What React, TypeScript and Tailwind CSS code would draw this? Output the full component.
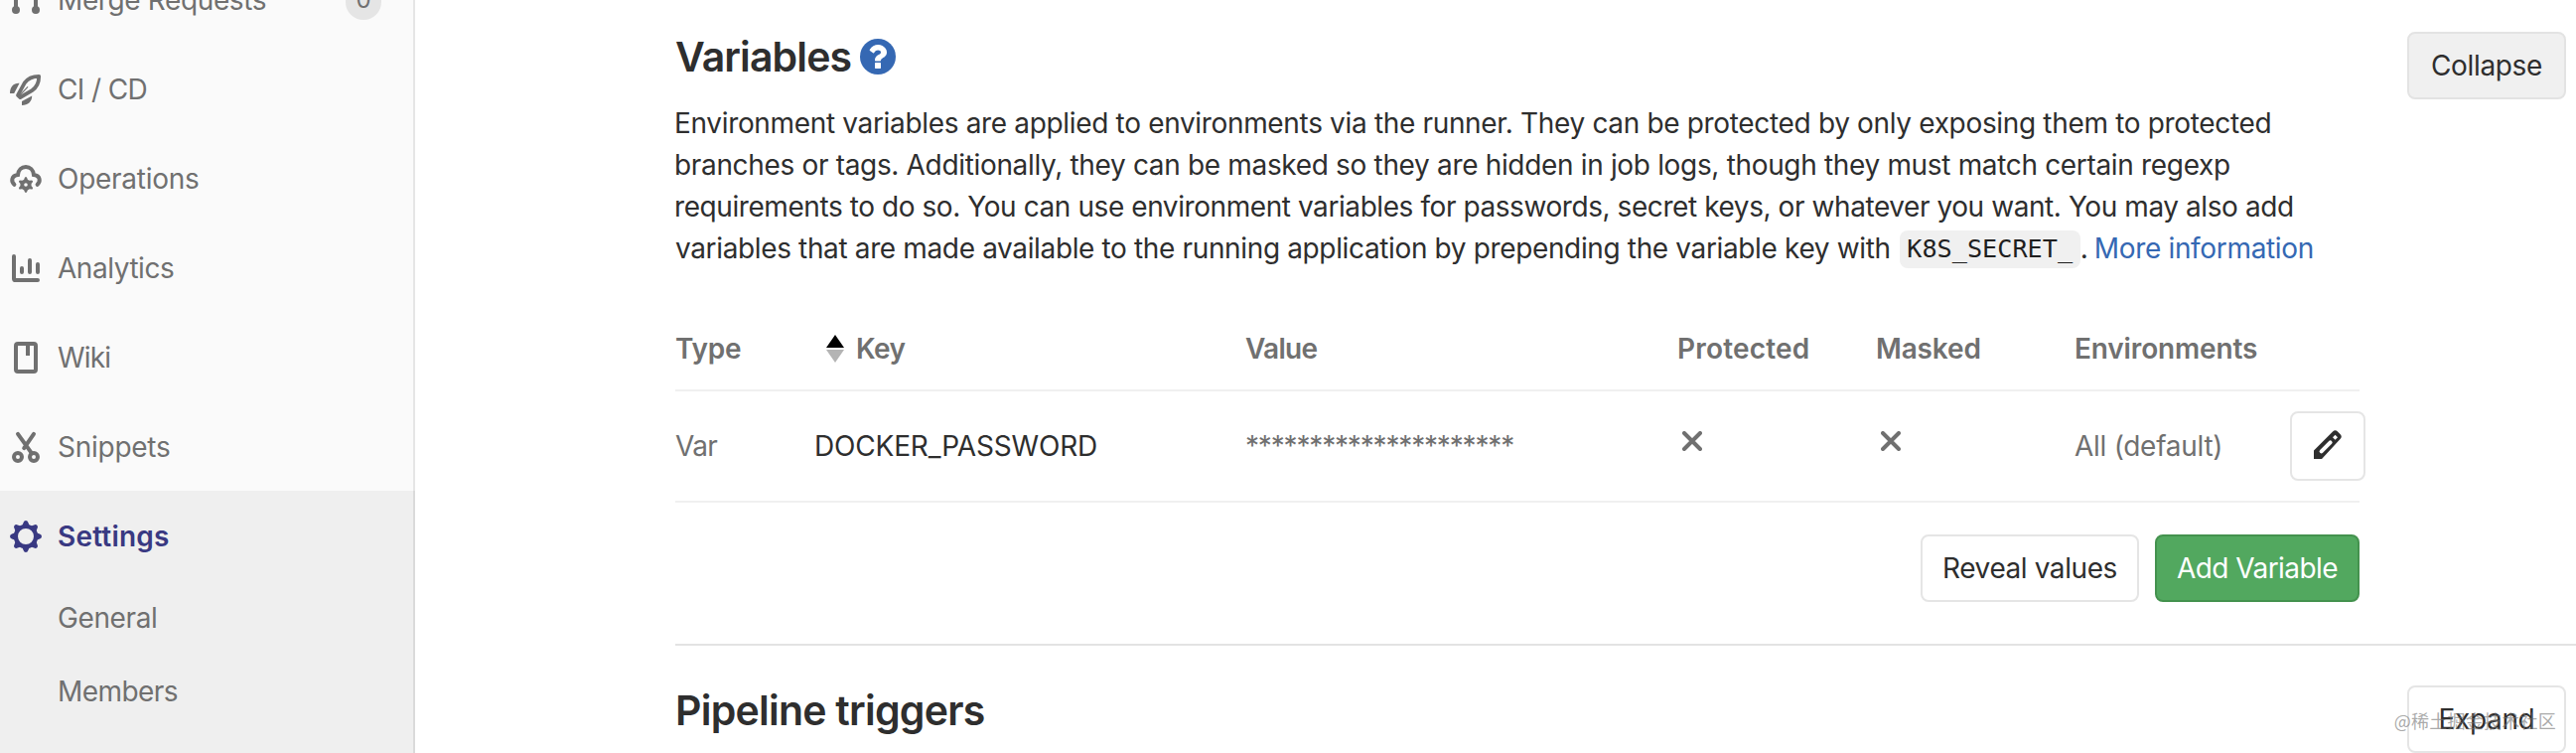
import type { ReactNode } from "react";

function Icon({ children, className = "" }: { children: ReactNode; className?: string }) {
  return (
    <svg viewBox="0 0 16 16" className={`h-8 w-8 shrink-0 overflow-visible ${className}`} fill="currentColor">
      {children}
    </svg>
  );
}

const MergeIcon = () => (
  <Icon>
    <circle cx="3" cy="3" r="2" />
    <circle cx="3" cy="13" r="2" />
    <circle cx="13" cy="13" r="2" />
    <path d="M3 3v10M13 13V6a3 3 0 0 0-3-3H8" fill="none" stroke="currentColor" strokeWidth="2" />
  </Icon>
);

const RocketIcon = () => (
  <Icon>
    <path
      d="M14.6 1.4c-3.4 0-5.6 1-7.2 3.3L4 10.9l1.2 1.1 5.9-3.4c2.4-1.6 3.5-3.8 3.5-7.2Z"
      fill="none"
      stroke="currentColor"
      strokeWidth="1.9"
      strokeLinejoin="round"
    />
    <path d="M4.8 4.9C1.9 4.7 0 6.6 0 10h2.1ZM11.1 11.3c0 3-2 4.7-5.1 4.7v-2Z" />
    <path d="m5 10.9 4-4.2" fill="none" stroke="currentColor" strokeWidth=".6" />
  </Icon>
);

const CloudGearIcon = () => (
  <Icon>
    <path
      d="M2.2 10.9C.6 9.4.5 6.5 4 6c.2-2.4 1.9-4 4-4s3.8 1.6 4 4c3.5.5 3.4 3.4 1.8 4.9"
      fill="none"
      stroke="currentColor"
      strokeWidth="2"
      strokeLinecap="round"
    />
    {[0, 60, 120, 180, 240, 300].map((a) => (
      <path key={a} d="M6.9 9 7.4 7.5Q8 6.5 8.6 7.5L9.1 9Z" transform={`rotate(${a} 8 11)`} />
    ))}
    <circle cx="8" cy="11" r="1.85" fill="none" stroke="currentColor" strokeWidth="1.9" />
  </Icon>
);

const ChartIcon = () => (
  <Icon>
    <path
      d="M2 2v11.2a.8.8 0 0 0 .8.8H14M6 8v2M10 4v6M14 6v4"
      fill="none"
      stroke="currentColor"
      strokeWidth="2"
      strokeLinecap="round"
    />
  </Icon>
);

const BookIcon = () => (
  <Icon>
    <rect x="3" y="1" width="10" height="14" rx="1" fill="none" stroke="currentColor" strokeWidth="2" />
    <path d="M8 1h2v6H8z" />
  </Icon>
);

const ScissorsIcon = () => (
  <Icon>
    <g fill="none" stroke="currentColor" strokeWidth="2" strokeLinecap="round">
      <circle cx="4" cy="13" r="2" />
      <circle cx="12" cy="13" r="2" />
      <path d="m4 1.4 7 9.8M12 1.4 7.1 8.6" />
    </g>
  </Icon>
);

const GearIcon = () => (
  <Icon>
    <circle cx="8" cy="8" r="5.05" fill="none" stroke="currentColor" strokeWidth="2.1" />
    {[0, 45, 90, 135, 180, 225, 270, 315].map((a) => (
      <path key={a} d="M6.100 2.700 6.800 1Q7.100 0 8 0t1.200 1l.7 1.700Z" transform={`rotate(${a} 8 8)`} />
    ))}
  </Icon>
);

const HelpIcon = () => (
  <svg viewBox="0 0 1536 1536" className="h-9 w-9">
    <circle cx="768" cy="768" r="768" fill="#3568b3" />
    <path
      fill="#fff"
      d="M896 1248v-192q0-14-9-23t-23-9h-192q-14 0-23 9t-9 23v192q0 14 9 23t23 9h192q14 0 23-9t9-23zm256-672q0-88-55.500-163t-138.500-116-170-41q-243 0-371 213-15 24 8 42l132 100q7 6 19 6 16 0 25-12 53-68 86-92 34-24 86-24 48 0 85.500 26t37.500 59q0 38-20 61t-68 45q-63 28-115.500 86.500t-52.500 125.500v36q0 14 9 23t23 9h192q14 0 23-9t9-23q0-19 21.500-49.500t54.500-49.500q32-18 49-28.500t46-35 44.500-48 28-60.500 12.500-81z"
    />
  </svg>
);

const CrossIcon = () => (
  <svg viewBox="0 0 20 20" className="h-5 w-5" fill="none" stroke="#707070" strokeWidth="4" strokeLinecap="round">
    <path d="m2 2 16 16M18 2 2 18" />
  </svg>
);

const PencilIcon = () => (
  <svg viewBox="0 0 28 29" className="h-[29px] w-7">
    <path d="M0 29v-8.500L19 1.500q2.500-2.500 5 0L26.500 4q2.500 2.500 0 5L8 29Z" fill="#2e2e2e" />
    <path d="M7.600 21.400 16.600 12.300" stroke="#fff" strokeWidth="4" strokeLinecap="round" />
    <path d="M21.500 4.700 24 7.200l-2.500 2.500L19 7.200Z" fill="#fff" />
  </svg>
);

const SortIcon = () => (
  <svg viewBox="0 0 18 28" className="h-7 w-[18px]">
    <path d="M9 0l9 13H0Z" fill="#000" />
    <path d="M9 28l9-13H0Z" fill="#b4b4b4" />
  </svg>
);

function NavItem({ icon, children, className }: { icon: ReactNode; children: ReactNode; className: string }) {
  return (
    <li className={`flex shrink-0 items-center gap-4 pr-8 pl-[10px] ${className}`}>
      {icon}
      {children}
    </li>
  );
}

function Button({ children, className }: { children: ReactNode; className: string }) {
  return (
    <button className={`flex h-[68px] shrink-0 items-center justify-center rounded-lg border-2 ${className}`}>
      {children}
    </button>
  );
}

export default function App() {
  return (
    <div className="relative flex h-[758px] w-[2594px] overflow-hidden bg-white font-['Inter','Noto_Sans_CJK_SC',sans-serif] text-[28px] leading-[42px] text-[#2e2e2e]">
      <aside className="flex w-[418px] shrink-0 flex-col bg-[#fafafa] text-[#707070]">
        <ul className="flex flex-col border-r-2 border-[#e5e5e5]">
          <NavItem icon={<MergeIcon />} className="-mt-[45px] h-[90px]">
            <span className="tracking-[-0.38px]">Merge Requests</span>
            <span className="ml-auto flex h-10 w-9 items-center justify-center rounded-[20px] bg-[#e5e5e5] text-2xl">0</span>
          </NavItem>
          <NavItem icon={<RocketIcon />} className="h-[90px]">
            <span className="tracking-[-0.63px]">CI / CD</span>
          </NavItem>
          <NavItem icon={<CloudGearIcon />} className="h-[90px]">
            <span className="tracking-[-0.27px]">Operations</span>
          </NavItem>
          <NavItem icon={<ChartIcon />} className="h-[90px]">
            <span className="tracking-[-0.45px]">Analytics</span>
          </NavItem>
          <NavItem icon={<BookIcon />} className="h-[90px]">
            <span className="tracking-[-0.8px]">Wiki</span>
          </NavItem>
          <NavItem icon={<ScissorsIcon />} className="h-[89px]">
            <span className="tracking-[-0.26px]">Snippets</span>
          </NavItem>
        </ul>
        <div className="grow border-r-2 border-[#dadada] bg-[#efefef]">
          <ul>
            <NavItem icon={<GearIcon />} className="h-[92px] font-semibold text-[#393982]">
              <span className="tracking-[0.19px]">Settings</span>
            </NavItem>
          </ul>
          <ul className="-mt-px pl-[58px] leading-[74px]">
            <li className="tracking-[-0.38px]">General</li>
            <li className="tracking-[-0.58px]">Members</li>
          </ul>
        </div>
      </aside>

      <main className="flex min-w-0 grow flex-col pl-[262px]">
        <section className="flex h-[650px] shrink-0 items-start justify-between border-b-2 border-[#e3e3e3] pr-[10px]">
          <div className="w-[1696px] pt-[33px]">
            <h2 className="flex h-12 items-center gap-[9px] text-[41px] leading-[48px] font-semibold">
              <span className="tracking-[-0.88px]">Variables</span>
              <HelpIcon />
            </h2>
            <p className="mt-[22px] whitespace-nowrap">
              <span className="-ml-px block tracking-[-0.334px]">
                Environment variables are applied to environments via the runner. They can be protected by only exposing them to protected
              </span>
              <span className="-ml-px block tracking-[-0.333px]">
                branches or tags. Additionally, they can be masked so they are hidden in job logs, though they must match certain regexp
              </span>
              <span className="-ml-px block tracking-[-0.425px]">
                requirements to do so. You can use environment variables for passwords, secret keys, or whatever you want. You may also add
              </span>
              <span className="flex h-[42px]">
                <span className="tracking-[-0.36px]">
                  variables that are made available to the running application by prepending the variable key with
                </span>
                <code className="mt-[3px] ml-[9px] h-[38px] w-[182px] rounded-lg bg-[#f0f0f0] text-center font-['DejaVu_Sans_Mono',monospace] text-[25.2px] leading-[37px] text-[#1f1f1f]">
                  K8S_SECRET_
                </code>
                <span>.</span>
                <a className="ml-[6px] tracking-[-0.33px] text-[#3568b3]">More information</a>
              </span>
            </p>

            <div className="mt-[39px]">
              <div className="grid h-[84px] grid-cols-[139px_435px_435px_200px_200px_217px_76px] items-center border-b-2 border-[#f0f0f0] font-semibold text-[#707070]">
                <span className="tracking-[-0.23px]">Type</span>
                <span className="flex items-center gap-3 pl-[13px] tracking-[-0.5px]">
                  <SortIcon />
                  Key
                </span>
                <span className="tracking-[-0.7px]">Value</span>
                <span className="tracking-[0.2px]">Protected</span>
                <span className="tracking-[-0.15px]">Masked</span>
                <span className="tracking-[-0.15px]">Environments</span>
              </div>
              <div className="grid h-[112px] grid-cols-[139px_435px_435px_200px_200px_217px_76px] items-center border-b-2 border-[#f0f0f0] text-[#707070]">
                <span className="tracking-[-0.7px]">Var</span>
                <span className="pl-px tracking-[-0.18px] text-[#2e2e2e]">DOCKER_PASSWORD</span>
                <span className="tracking-[-1.17px]">*********************</span>
                <span className="pb-[11px] pl-[5px]">
                  <CrossIcon />
                </span>
                <span className="pb-[11px] pl-[5px]">
                  <CrossIcon />
                </span>
                <span className="tracking-[-0.28px]">All (default)</span>
                <button className="flex h-[70px] w-[76px] items-center justify-center rounded-lg border-2 border-[#e5e5e5] bg-white pb-[3px]">
                  <PencilIcon />
                </button>
              </div>
            </div>

            <div className="mt-8 flex justify-end gap-4">
              <Button className="w-[220px] border-[#e5e5e5] bg-white tracking-[-0.42px]">Reveal values</Button>
              <Button className="w-[206px] border-[#44924e] bg-[#52a85f] tracking-[-0.55px] text-white">Add Variable</Button>
            </div>
          </div>
          <Button className="mt-8 w-40 border-[#e3e3e3] bg-[#f0f0f0] tracking-[-0.35px]">Collapse</Button>
        </section>

        <section className="flex items-start justify-between pt-10 pr-[10px]">
          <h2 className="text-[41px] leading-[50px] font-semibold tracking-[-0.76px]">Pipeline triggers</h2>
          <Button className="w-40 border-[#e5e5e5] bg-white tracking-[-0.36px]">Expand</Button>
        </section>
      </main>

      <span className="absolute right-5 bottom-[19px] font-['Noto_Sans_CJK_SC',sans-serif] text-[18px] leading-7 tracking-[0.25px] text-[#707070]/60">
        @稀土掘金技术社区
      </span>
    </div>
  );
}
